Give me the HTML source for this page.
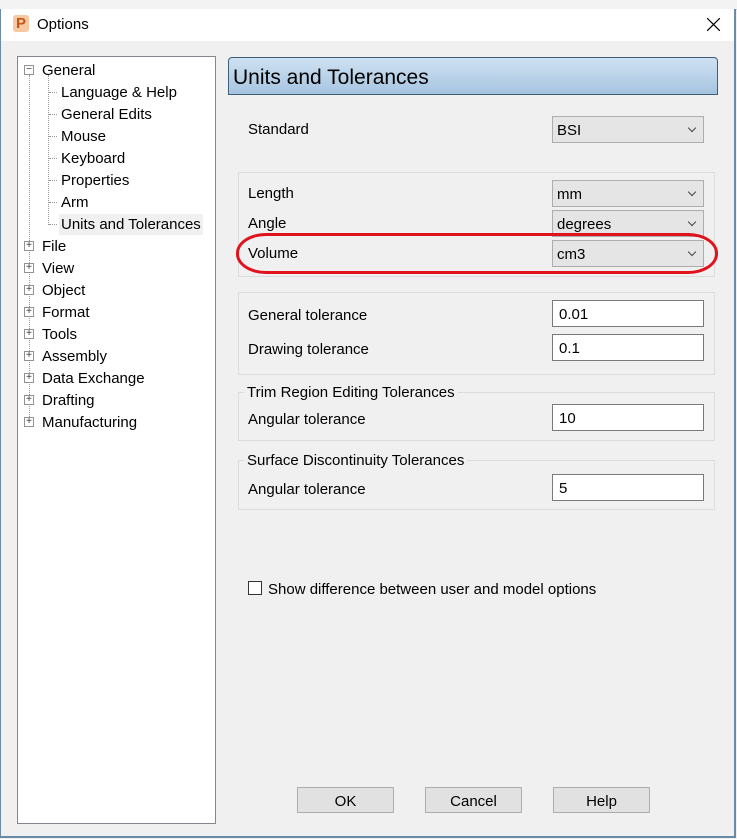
<!DOCTYPE html><html><head><style>
body{margin:0;width:737px;height:839px;background:#f0f0f0;font-family:"Liberation Sans",sans-serif;font-size:15px;color:#000;position:relative;overflow:hidden}
.a{position:absolute}
.top{left:0;top:0;width:737px;height:9px;background:#f3f3f3;border-bottom:1px solid #ccc}
.title{left:1px;top:9px;width:733px;height:32px;background:#fff}
.win{left:0;top:9px;width:733px;height:826px;border:1px solid #6a8aa6;border-width:1px 2px 2px 1px}
.tree{left:17px;top:56px;width:199px;height:768px;background:#fff;border:1px solid #828790;padding-top:2px;box-sizing:border-box}
.ti{position:absolute;white-space:nowrap}
.pm{position:absolute;width:8px;height:8px;border:1px solid #919191;background:#fff;font-size:10px;line-height:8px;text-align:center;color:#333}
.hdr{left:228px;top:57px;width:484px;height:36px;border:1px solid #3e5f79;border-radius:4px 4px 0 0;background:linear-gradient(#cfe1f2,#a6c4e0);font-size:21px;line-height:40px;padding-left:4px}
.grp{border:1px solid #dcdcdc}
.sel{border:1px solid #adadad;background:#e5e5e5;line-height:28px;padding-left:4px;box-sizing:border-box;width:152px;height:27px}
.sel:after{content:"";position:absolute;right:8px;top:8px;width:5px;height:5px;border-right:1px solid #444;border-bottom:1px solid #444;transform:rotate(45deg)}
.inp{width:152px;height:27px;border:1px solid #7a7a7a;background:#fff;line-height:27px;padding-left:6px;box-sizing:border-box}
.btn{width:97px;height:26px;border:1px solid #adadad;background:#e1e1e1;text-align:center;line-height:28px;box-sizing:border-box}
.dl{position:absolute;border-left:1px dotted #999}
.dh{position:absolute;border-top:1px dotted #999;width:8px}
</style></head><body>
<div class="a top"></div>
<div class="a win"></div>
<div class="a title"></div>
<div class="a" style="left:13px;top:15px;width:16px;height:17px;background:#f6c9a2;border-radius:3px;color:#c0561a;font-weight:bold;font-size:15px;line-height:17px;text-align:center">P</div>
<div class="a" style="left:37px;top:16px;font-size:15px">Options</div>
<svg class="a" style="left:707px;top:18px" width="13" height="13"><path d="M0 0L13 13M13 0L0 13" stroke="#000" stroke-width="1.2"/></svg>
<div class="a tree">
<div class="dl" style="left:11px;top:18px;height:348px"></div>
<div class="dl" style="left:30px;top:18px;height:150px"></div>
<div class="pm" style="left:6px;top:8px">−</div><div class="ti" style="left:24px;top:5px">General</div>
<div class="dh" style="left:31px;top:35px"></div><div class="ti" style="left:43px;top:27px">Language &amp; Help</div>
<div class="dh" style="left:31px;top:57px"></div><div class="ti" style="left:43px;top:49px">General Edits</div>
<div class="dh" style="left:31px;top:79px"></div><div class="ti" style="left:43px;top:71px">Mouse</div>
<div class="dh" style="left:31px;top:101px"></div><div class="ti" style="left:43px;top:93px">Keyboard</div>
<div class="dh" style="left:31px;top:123px"></div><div class="ti" style="left:43px;top:115px">Properties</div>
<div class="dh" style="left:31px;top:145px"></div><div class="ti" style="left:43px;top:137px">Arm</div>
<div class="dh" style="left:31px;top:167px"></div><div class="ti" style="left:41px;top:157px;padding:2px;background:#f0f0f0">Units and Tolerances</div>
<div class="pm" style="left:6px;top:184px">+</div><div class="ti" style="left:24px;top:181px">File</div>
<div class="pm" style="left:6px;top:206px">+</div><div class="ti" style="left:24px;top:203px">View</div>
<div class="pm" style="left:6px;top:228px">+</div><div class="ti" style="left:24px;top:225px">Object</div>
<div class="pm" style="left:6px;top:250px">+</div><div class="ti" style="left:24px;top:247px">Format</div>
<div class="pm" style="left:6px;top:272px">+</div><div class="ti" style="left:24px;top:269px">Tools</div>
<div class="pm" style="left:6px;top:294px">+</div><div class="ti" style="left:24px;top:291px">Assembly</div>
<div class="pm" style="left:6px;top:316px">+</div><div class="ti" style="left:24px;top:313px">Data Exchange</div>
<div class="pm" style="left:6px;top:338px">+</div><div class="ti" style="left:24px;top:335px">Drafting</div>
<div class="pm" style="left:6px;top:360px">+</div><div class="ti" style="left:24px;top:357px">Manufacturing</div>
</div>
<div class="a hdr">Units and Tolerances</div>
<div class="a" style="left:248px;top:121px">Standard</div>
<div class="a sel" style="left:552px;top:116px">BSI</div>
<div class="a grp" style="left:238px;top:172px;width:475px;height:103px"></div>
<div class="a" style="left:248px;top:185px">Length</div>
<div class="a sel" style="left:552px;top:180px">mm</div>
<div class="a" style="left:248px;top:215px">Angle</div>
<div class="a sel" style="left:552px;top:210px">degrees</div>
<div class="a" style="left:248px;top:245px">Volume</div>
<div class="a sel" style="left:552px;top:240px">cm3</div>
<div class="a" style="left:236px;top:233px;width:482px;height:41px;border:3px solid #e0121c;border-radius:30px/20px;box-sizing:border-box"></div>
<div class="a grp" style="left:238px;top:292px;width:475px;height:81px"></div>
<div class="a" style="left:248px;top:307px">General tolerance</div>
<div class="a inp" style="left:552px;top:300px">0.01</div>
<div class="a" style="left:248px;top:341px">Drawing tolerance</div>
<div class="a inp" style="left:552px;top:334px">0.1</div>
<div class="a grp" style="left:238px;top:392px;width:475px;height:47px"></div>
<div class="a" style="left:244px;top:384px;background:#f0f0f0;padding:0 3px">Trim Region Editing Tolerances</div>
<div class="a" style="left:248px;top:411px">Angular tolerance</div>
<div class="a inp" style="left:552px;top:404px">10</div>
<div class="a grp" style="left:238px;top:460px;width:475px;height:48px"></div>
<div class="a" style="left:244px;top:452px;background:#f0f0f0;padding:0 3px">Surface Discontinuity Tolerances</div>
<div class="a" style="left:248px;top:481px">Angular tolerance</div>
<div class="a inp" style="left:552px;top:474px">5</div>
<div class="a" style="left:248px;top:581px;width:14px;height:14px;border:1px solid #333;background:#fff;box-sizing:border-box"></div>
<div class="a" style="left:268px;top:581px">Show difference between user and model options</div>
<div class="a btn" style="left:297px;top:787px">OK</div>
<div class="a btn" style="left:425px;top:787px">Cancel</div>
<div class="a btn" style="left:553px;top:787px">Help</div>
</body></html>
